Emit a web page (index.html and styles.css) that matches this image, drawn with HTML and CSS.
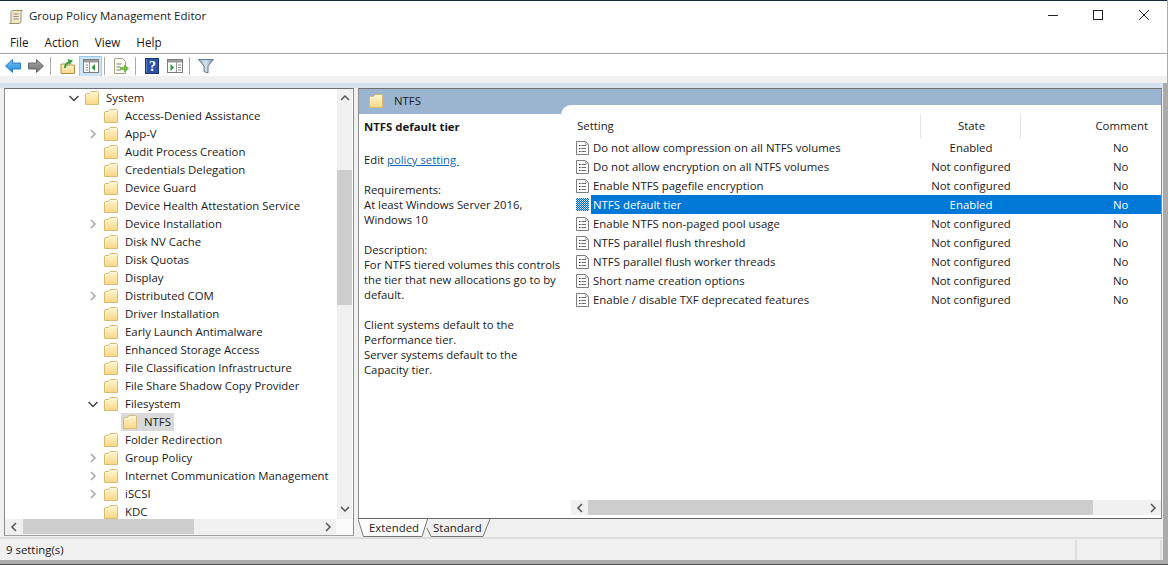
FILE: index.html
```html
<!DOCTYPE html>
<html lang="en">
<head>
<meta charset="utf-8">
<title>Group Policy Management Editor</title>
<link rel="stylesheet" href="styles.css">
</head>
<body>
<svg class="defs" width="0" height="0" aria-hidden="true">
  <defs>
    <linearGradient id="fg" x1="0" y1="0" x2="0" y2="1"><stop offset="0" stop-color="#fff3cc"/><stop offset=".45" stop-color="#fce9af"/><stop offset="1" stop-color="#f6d686"/></linearGradient>
    <linearGradient id="bl" x1="0" y1="0" x2="0" y2="1"><stop offset="0" stop-color="#7cc4f4"/><stop offset="1" stop-color="#1f86d8"/></linearGradient>
    <linearGradient id="gr" x1="0" y1="0" x2="0" y2="1"><stop offset="0" stop-color="#a8a8a8"/><stop offset="1" stop-color="#6e6e6e"/></linearGradient>
    <linearGradient id="fn" x1="0" y1="0" x2="1" y2="0"><stop offset="0" stop-color="#8fb0c8"/><stop offset=".5" stop-color="#d5e3ee"/><stop offset="1" stop-color="#6d8ba3"/></linearGradient>
    <pattern id="dt" width="2" height="2" patternUnits="userSpaceOnUse"><rect width="2" height="2" fill="#0a6cc2"/><rect width="1" height="1" fill="#cfe6f7"/><rect x="1" y="1" width="1" height="1" fill="#8fc4ea"/></pattern>
    <symbol id="folder" viewBox="0 0 16 14">
      <path d="M1.500 13.500V3l1-.5h3L7 .500h6.500l1 1v12z" fill="url(#fg)" stroke="#d8bb70"/>
      <path d="M2.500 3.500h3L7 2h6.500" fill="none" stroke="#fffbe8"/>
    </symbol>
    <symbol id="doc" viewBox="0 0 14 14">
      <path d="M.5.500h9l3 3v10H.5z" fill="#fff" stroke="#7d7d7d"/>
      <path d="M9.500.500v3h3" fill="none" stroke="#b5b5b5"/>
      <path d="M3 4.500h1.500M3 7.500h1.500M3 10.500h1.500" stroke="#333"/>
      <path d="M5.500 4.500h4.500M5.500 7.500h4.500M5.500 10.500h4.500" stroke="#6b6b6b"/>
    </symbol>
    <symbol id="chev-d" viewBox="0 0 10 10"><path d="M.5 3l4.500 4.500L9.500 3" fill="none" stroke="#444" stroke-width="1.500"/></symbol>
    <symbol id="chev-r" viewBox="0 0 10 10"><path d="M3 1l4 4-4 4" fill="none" stroke="#a6a6a6" stroke-width="1.500"/></symbol>
  </defs>
</svg>
<div class="window">
  <header class="titlebar">
    <svg class="app-icon" viewBox="0 0 16 16" width="16" height="16"><path d="M4.500 1.500h10c-1 .5-1.500 1.500-1.500 2.500v8c0 1.500-1 2.500-2 2.500H1.500c1-.5 1.500-1 1.500-2.500V4c0-1.500.5-2.500 1.500-2.500z" fill="#f1e8c8" stroke="#97906f"/><path d="M5.500 5h5M5.500 7.500h5M5.500 10h5" stroke="#8c8c80"/></svg>
    <span class="title">Group Policy Management Editor</span>
    <div class="controls">
      <svg width="12" height="12" viewBox="0 0 12 12"><path d="M2 6.500h10" stroke="#222"/></svg>
      <svg width="12" height="12" viewBox="0 0 12 12"><rect x="1.500" y="1.500" width="9" height="9" fill="none" stroke="#222"/></svg>
      <svg width="12" height="12" viewBox="0 0 12 12"><path d="M1 1l10 10M11 1L1 11" stroke="#222"/></svg>
    </div>
  </header>
  <nav class="menubar"><span>File</span><span>Action</span><span>View</span><span>Help</span></nav>
  <div class="toolbar">
    <svg class="tb" width="16" height="16" viewBox="0 0 16 16"><path d="M.5 8l7-6.500v3.500h8v6h-8v3.500z" fill="url(#bl)" stroke="#2a7fc4"/></svg>
    <svg class="tb" width="16" height="16" viewBox="0 0 16 16"><path d="M15.500 8l-7-6.500v3.500h-8v6h8v3.500z" fill="url(#gr)" stroke="#6a6a6a"/></svg>
    <i class="sep"></i>
    <svg class="tb" width="16" height="16" viewBox="0 0 16 16"><path d="M1 15.500V6h5l1 1h7.500v8.500z" fill="url(#fg)" stroke="#b39240"/><path d="M5 10c0-3 2-5 4.500-6" fill="none" stroke="#3ea13e" stroke-width="2.200"/><path d="M7.500 1L13 2.500 9.500 7z" fill="#3ea13e"/></svg>
    <span class="tb-on"><svg width="16" height="16" viewBox="0 0 16 16"><rect x=".5" y="1.500" width="15" height="13" fill="#fff" stroke="#7c7c7c"/><path d="M1 2h14v2.500H1z" fill="#9a9a9a"/><path d="M6.500 4v10" stroke="#999"/><path d="M2.500 7h2.500M2.500 9.500h2.500M2.500 12h2.500" stroke="#888"/><path d="M12 6l-3.500 3.500L12 13z" fill="#2f9a3f"/></svg></span>
    <i class="sep n"></i>
    <svg class="tb" width="16" height="16" viewBox="0 0 16 16"><path d="M1.500.5h8l3 3v12h-11z" fill="#fdfbf2" stroke="#aaa38c"/><path d="M3.500 6h5M3.500 9h4M3.500 12h4" stroke="#777"/><path d="M7.500 9.500h4V7l4 3.500-4 3.500v-2.500h-4z" fill="#79c143" stroke="#4d9a25" stroke-width=".6"/></svg>
    <i class="sep"></i>
    <svg class="tb help" width="15" height="16" viewBox="0 0 15 16"><rect x=".5" y=".5" width="13" height="15" fill="#2b53a8" stroke="#1d3478"/><path d="M1.500 1.500v13" stroke="#5f80c6"/><text x="7.500" y="13" class="q">?</text></svg>
    <svg class="tb" width="16" height="16" viewBox="0 0 16 16"><rect x=".5" y="1.500" width="15" height="13" fill="#fff" stroke="#7c7c7c"/><path d="M1 2h14v2.500H1z" fill="#9a9a9a"/><path d="M9.500 4v10" stroke="#999"/><path d="M11 7h3M11 9.500h3M11 12h3" stroke="#888"/><path d="M3.500 6L7 9.500 3.500 13z" fill="#2f9a3f"/></svg>
    <i class="sep n"></i>
    <svg class="tb" width="16" height="16" viewBox="0 0 16 16"><path d="M.5 1.500h15L10 8v7l-4-1.500V8z" fill="url(#fn)" stroke="#64798c"/></svg>
  </div>
  <div class="toolstrip"></div>
  <main class="panes">
    <section class="tree-pane">
      <div class="tree-main">
        <ul class="tree">
          <li class="l1"><svg class="tw"><use href="#chev-d"/></svg><svg class="fi"><use href="#folder"/></svg><span>System</span></li>
          <li><svg class="fi"><use href="#folder"/></svg><span>Access-Denied Assistance</span></li>
          <li><svg class="tw"><use href="#chev-r"/></svg><svg class="fi"><use href="#folder"/></svg><span>App-V</span></li>
          <li><svg class="fi"><use href="#folder"/></svg><span>Audit Process Creation</span></li>
          <li><svg class="fi"><use href="#folder"/></svg><span>Credentials Delegation</span></li>
          <li><svg class="fi"><use href="#folder"/></svg><span>Device Guard</span></li>
          <li><svg class="fi"><use href="#folder"/></svg><span>Device Health Attestation Service</span></li>
          <li><svg class="tw"><use href="#chev-r"/></svg><svg class="fi"><use href="#folder"/></svg><span>Device Installation</span></li>
          <li><svg class="fi"><use href="#folder"/></svg><span>Disk NV Cache</span></li>
          <li><svg class="fi"><use href="#folder"/></svg><span>Disk Quotas</span></li>
          <li><svg class="fi"><use href="#folder"/></svg><span>Display</span></li>
          <li><svg class="tw"><use href="#chev-r"/></svg><svg class="fi"><use href="#folder"/></svg><span>Distributed COM</span></li>
          <li><svg class="fi"><use href="#folder"/></svg><span>Driver Installation</span></li>
          <li><svg class="fi"><use href="#folder"/></svg><span>Early Launch Antimalware</span></li>
          <li><svg class="fi"><use href="#folder"/></svg><span>Enhanced Storage Access</span></li>
          <li><svg class="fi"><use href="#folder"/></svg><span>File Classification Infrastructure</span></li>
          <li><svg class="fi"><use href="#folder"/></svg><span>File Share Shadow Copy Provider</span></li>
          <li><svg class="tw"><use href="#chev-d"/></svg><svg class="fi"><use href="#folder"/></svg><span>Filesystem</span></li>
          <li class="l3"><div class="sel"><svg class="fi"><use href="#folder"/></svg><span>NTFS</span></div></li>
          <li><svg class="fi"><use href="#folder"/></svg><span>Folder Redirection</span></li>
          <li><svg class="tw"><use href="#chev-r"/></svg><svg class="fi"><use href="#folder"/></svg><span>Group Policy</span></li>
          <li><svg class="tw"><use href="#chev-r"/></svg><svg class="fi"><use href="#folder"/></svg><span>Internet Communication Management</span></li>
          <li><svg class="tw"><use href="#chev-r"/></svg><svg class="fi"><use href="#folder"/></svg><span>iSCSI</span></li>
          <li><svg class="fi"><use href="#folder"/></svg><span>KDC</span></li>
        </ul>
        <div class="vscroll">
          <svg width="10" height="10" class="arrow"><path d="M1 7l4-4 4 4" fill="none" stroke="#555" stroke-width="1.500"/></svg>
          <div class="vtrack"><div class="vthumb"></div></div>
          <svg width="10" height="10" class="arrow"><path d="M1 3l4 4 4-4" fill="none" stroke="#555" stroke-width="1.500"/></svg>
        </div>
      </div>
      <div class="hscroll tree-h">
        <svg width="10" height="10"><path d="M7 1L3 5l4 4" fill="none" stroke="#555" stroke-width="1.500"/></svg>
        <div class="htrack"><div class="hthumb t"></div></div>
        <svg width="10" height="10"><path d="M3 1l4 4-4 4" fill="none" stroke="#555" stroke-width="1.500"/></svg>
      </div>
    </section>
    <section class="right-pane">
      <div class="pane-head"><svg class="fi big"><use href="#folder"/></svg><span>NTFS</span></div>
      <div class="content">
        <article class="desc">
          <h2>NTFS default tier</h2>
          <p>Edit <a href="#">policy setting&nbsp;</a></p>
          <p>Requirements:<br>At least Windows Server 2016, Windows 10</p>
          <p>Description:<br>For NTFS tiered volumes this controls the tier that new allocations go to by default.</p>
          <p>Client systems default to the Performance tier.<br>Server systems default to the Capacity tier.</p>
        </article>
        <div class="list-wrap">
          <div class="list-head"><span class="c1">Setting</span><span class="c2">State</span><span class="c3">Comment</span></div>
          <ul class="rows">
            <li><svg class="di"><use href="#doc"/></svg><span class="c1">Do not allow compression on all NTFS volumes</span><span class="c2">Enabled</span><span class="c3">No</span></li>
            <li><svg class="di"><use href="#doc"/></svg><span class="c1">Do not allow encryption on all NTFS volumes</span><span class="c2">Not configured</span><span class="c3">No</span></li>
            <li><svg class="di"><use href="#doc"/></svg><span class="c1">Enable NTFS pagefile encryption</span><span class="c2">Not configured</span><span class="c3">No</span></li>
            <li class="on"><svg class="di" viewBox="0 0 14 14"><rect width="13" height="13" fill="url(#dt)"/></svg><span class="c1">NTFS default tier</span><span class="c2">Enabled</span><span class="c3">No</span></li>
            <li><svg class="di"><use href="#doc"/></svg><span class="c1">Enable NTFS non-paged pool usage</span><span class="c2">Not configured</span><span class="c3">No</span></li>
            <li><svg class="di"><use href="#doc"/></svg><span class="c1">NTFS parallel flush threshold</span><span class="c2">Not configured</span><span class="c3">No</span></li>
            <li><svg class="di"><use href="#doc"/></svg><span class="c1">NTFS parallel flush worker threads</span><span class="c2">Not configured</span><span class="c3">No</span></li>
            <li><svg class="di"><use href="#doc"/></svg><span class="c1">Short name creation options</span><span class="c2">Not configured</span><span class="c3">No</span></li>
            <li><svg class="di"><use href="#doc"/></svg><span class="c1">Enable / disable TXF deprecated features</span><span class="c2">Not configured</span><span class="c3">No</span></li>
          </ul>
          <div class="hscroll list-h">
            <svg width="10" height="10"><path d="M7 1L3 5l4 4" fill="none" stroke="#555" stroke-width="1.500"/></svg>
            <div class="htrack"><div class="hthumb l"></div></div>
            <svg width="10" height="10"><path d="M3 1l4 4-4 4" fill="none" stroke="#555" stroke-width="1.500"/></svg>
          </div>
        </div>
      </div>
      <div class="tabs">
        <svg class="tabshape" width="140" height="20" viewBox="0 0 140 20"><path d="M0 1l5.500 17.500H64L69.500 1" fill="#fff" stroke="#777"/><path d="M69 10l4 8.500h52L132 1" fill="none" stroke="#777"/></svg>
        <span class="tab">Extended</span><span class="tab">Standard</span>
      </div>
    </section>
  </main>
  <footer class="status"><span class="status-text">9 setting(s)</span><span class="cell wide"></span><span class="cell"></span></footer>
</div>
</body>
</html>
```
FILE: styles.css
```css
* { box-sizing: border-box; }
html, body { margin: 0; padding: 0; height: 100%; overflow: hidden; }
body { font: 11.4px/16px "Open Sans", "Liberation Sans", sans-serif; color: #1a1a1a; background: #ababab; border-bottom: 1px solid #4c5154; }
.defs { position: absolute; }
ul { list-style: none; margin: 0; padding: 0; }
.window { width: 1167px; height: 560px; border-top: 1px solid #16283a; display: flex; flex-direction: column; }
.titlebar { height: 31px; background: #fff; display: flex; align-items: center; padding-left: 8px; flex: none; }
.app-icon { flex: none; }
.title { margin-left: 5px; color: #222; font-size: 11.5px; padding-bottom: 1px; }
.controls { margin-left: auto; display: flex; gap: 34px; padding-right: 17px; padding-bottom: 3px; }
.menubar { height: 22px; background: #fff; display: flex; gap: 16px; padding: 0 0 2px 10px; align-items: center; border-bottom: 1px solid #a8a8a8; flex: none; font-size: 11.7px; }
.toolbar { height: 22px; background: #fff; display: flex; align-items: center; padding: 2px 0 0 5px; flex: none; }
.tb { flex: none; margin-right: 7px; }
.sep { flex: none; width: 1px; height: 18px; background: #a8a8a8; margin: 0 9px 0 -1px; }
.sep.n { margin-right: 8px; }
.tb-on { flex: none; width: 23px; height: 21px; background: #cde4f7; border: 1px solid #99c9ef; display: flex; align-items: center; justify-content: center; margin: 0 3px 0 -4px; }
.q { font: 700 14px "Liberation Serif", serif; fill: #fff; text-anchor: middle; }
.toolstrip { height: 7px; background: #f0f0f0; flex: none; }
.panes { height: 454px; display: flex; background: #f0f0f0; border-top: 5px solid #d6e2ef; padding: 0 1px 0 4px; gap: 4px; flex: none; margin-right: 4px; }
.tree-pane { width: 350px; margin-bottom: 1px; background: #f0f0f0; border: 1px solid #8c8c8c; border-top-color: #6e6e6e; border-bottom: 1px solid #a0a0a0; display: flex; flex-direction: column; }
.tree-main { flex: 1; min-height: 0; display: flex; background: #fff; overflow: hidden; }
.tree { flex: 1; min-width: 0; padding-left: 63px; overflow: hidden; }
.tree li { height: 18px; flex: none; display: flex; align-items: center; padding-left: 35px; position: relative; white-space: nowrap; }
.tree li.l1 { padding-left: 16px; }
.tree li.l3 { padding-left: 53px; }
.tw { position: absolute; width: 10px; height: 10px; left: 20px; top: 4px; }
.l1 .tw { left: 1px; }
.fi { flex: none; width: 16px; height: 14px; margin-right: 6px; }
.sel { height: 18px; display: flex; align-items: center; padding: 0 3px 0 1px; background: #d9d9d9; }
.vscroll { flex: none; width: 15px; margin-right: 1px; background: #f0f0f0; display: flex; flex-direction: column; align-items: center; padding: 1px 0 2px; }
.arrow { flex: none; margin: 3px 0; }
.vtrack { flex: 1; width: 100%; padding-top: 64px; }
.vthumb { height: 135px; background: #cdcdcd; }
.hscroll { flex: none; height: 15px; display: flex; align-items: center; background: #f0f0f0; padding: 0 4px; }
.htrack { flex: 1; height: 100%; }
.hthumb { height: 100%; background: #cdcdcd; }
.hthumb.t { width: 171px; margin-left: 4px; }
.hthumb.l { width: 505px; margin-left: 3px; }
.tree-h { height: 16px; padding: 0 20px 1px 4px; background: linear-gradient(#f0f0f0, #f0f0f0) 0 0 / 331px 100% no-repeat, #fafafa; }
.right-pane { flex: 1; min-width: 0; display: flex; flex-direction: column; border: 1px solid #8c8c8c; border-top-color: #6e6e6e; border-bottom: 0; background: #fff; position: relative; }
.pane-head { height: 25px; background: #9bb5d1; display: flex; align-items: center; padding: 0 0 1px 9px; flex: none; }
.fi.big { margin-right: 10px; }
.content { flex: 1; min-height: 0; display: flex; background: #fff; }
.desc { width: 202px; flex: none; padding: 5px 0 0 5px; font-size: 11.3px; }
.desc h2 { font: 700 11.4px/16px "Open Sans", "Liberation Sans", sans-serif; margin: 0 0 17px; }
.desc p { margin: 0 0 15px; line-height: 15px; }
.desc a { color: #0a66b7; text-decoration: underline; }
.list-wrap { flex: 1; min-width: 0; display: flex; flex-direction: column; position: relative; margin-top: -9px; background: #fff; border-top-left-radius: 10px; padding-top: 9px; }
.list-head { height: 24px; display: flex; align-items: center; flex: none; padding-left: 16px; }
.list-head .c1 { width: 343px; flex: none; }
.list-head .c2 { border-left: 1px solid #e5e5e5; border-right: 1px solid #e5e5e5; height: 24px; line-height: 24px; text-align: center; width: 101px; flex: none; padding-left: 2px; }
.list-head .c3 { text-align: right; width: 127px; flex: none; }
.rows { flex: 1; min-height: 0; padding-left: 15px; }
.rows li { height: 19px; display: flex; align-items: center; }
.di { flex: none; width: 14px; height: 14px; margin-right: 3px; }
.rows .c1 { width: 328px; flex: none; }
.rows .c2 { width: 100px; flex: none; text-align: center; }
.rows .c3 { flex: 1; padding-left: 92px; }
.rows li.on { color: #fff; background: linear-gradient(#0078d7, #0078d7) 15px 0 / 100% 100% no-repeat; }
.list-h { margin: 0 0 3px 10px; padding-right: 3px; }
.tabs { height: 19px; flex: none; background: #f0f0f0; border-top: 1px solid #666; display: flex; position: relative; padding-left: 11px; gap: 14px; align-items: center; margin-left: -1px; margin-right: -1px; }
.tabshape { position: absolute; left: 0; top: -1px; }
.tab { position: relative; }
.status { flex: 1; margin-right: 4px; background: #f0f0f0; border-top: 2px solid #dcdcdc; display: flex; padding-left: 6px; }
.status-text { flex: 1; align-self: center; padding-top: 1px; }
.cell { flex: none; width: 3px; border-left: 2px solid #dcdcdc; margin-top: 1px; }
.cell.wide { width: 85px; }
```
